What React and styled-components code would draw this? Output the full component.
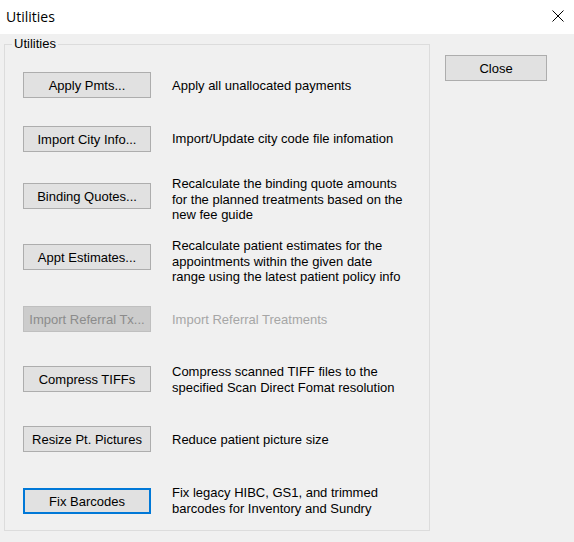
import React from 'react';
import styled, { createGlobalStyle } from 'styled-components';

const GlobalStyle = createGlobalStyle`
html, body {
    margin: 0;
    padding: 0;
    background: #f0f0f0;
}
body {
    font-family: "Liberation Sans", Arial, sans-serif;
    font-size: 13px;
    color: #000;
}
`

const Window = styled.div`
width: 574px;
height: 542px;
display: flex;
flex-direction: column;
background: #f0f0f0;
overflow: hidden;
`

const TitleBar = styled.div`
height: 34px;
flex: none;
background: #fff;
display: flex;
align-items: center;
justify-content: space-between;
padding: 0 10px 0 6px;
box-sizing: border-box;
`

const Title = styled.span`
font-family: "Open Sans", "Noto Sans", sans-serif;
font-size: 14px;
padding-bottom: 2px;
`

const CloseX = styled.button`
width: 12px;
height: 12px;
padding: 0;
border: 0;
background: none;
display: flex;
margin-bottom: 3px;
`

const Body = styled.div`
flex: 1;
display: flex;
align-items: flex-start;
padding: 2px 0 0 4px;
`

const Group = styled.fieldset`
margin: 0;
padding: 0;
width: 426px;
height: 495px;
box-sizing: border-box;
border: 1px solid #dcdcdc;
`

const Legend = styled.legend`
margin-left: 7px;
padding: 0 2px;
line-height: 16px;
`

const Rows = styled.div`
padding: 20px 0 0 18px;
`

const Row = styled.div`
display: flex;
align-items: flex-start;
height: ${p => p.$height}px;
`

const Button = styled.button`
width: 128px;
height: 26px;
flex: none;
box-sizing: border-box;
padding: 0;
font-family: "Liberation Sans", Arial, sans-serif;
font-size: 13px;
color: ${p => p.disabled ? '#8b8b8b' : '#000'};
background: ${p => p.disabled ? '#cccccc' : '#e1e1e1'};
border: ${p => p.$default ? '2px solid #0078d7' : `1px solid ${p.disabled ? '#bfbfbf' : '#adadad'}`};
`

const Description = styled.div`
margin: ${p => p.$offset}px 0 0 21px;
line-height: 15.5px;
color: ${p => p.$disabled ? '#a6a6a6' : '#000'};
`

const CloseButton = styled(Button)`
width: 102px;
margin: 19px 0 0 15px;
`

const utilities = [
    { label: 'Apply Pmts...', text: ['Apply all unallocated payments'], height: 54, offset: 6 },
    { label: 'Import City Info...', text: ['Import/Update city code file infomation'], height: 57, offset: 5 },
    { label: 'Binding Quotes...', text: ['Recalculate the binding quote amounts', 'for the planned treatments based on the', 'new fee guide'], height: 61, offset: -7 },
    { label: 'Appt Estimates...', text: ['Recalculate patient estimates for the', 'appointments within the given date', 'range using the latest patient policy info'], height: 62, offset: -6 },
    { label: 'Import Referral Tx...', text: ['Import Referral Treatments'], height: 60, offset: 6, disabled: true },
    { label: 'Compress TIFFs', text: ['Compress scanned TIFF files to the', 'specified Scan Direct Fomat resolution'], height: 60, offset: -2 },
    { label: 'Resize Pt. Pictures', text: ['Reduce patient picture size'], height: 62, offset: 6 },
    { label: 'Fix Barcodes', text: ['Fix legacy HIBC, GS1, and trimmed', 'barcodes for Inventory and Sundry'], height: 40, offset: -3, isDefault: true },
];

const App = () => {
    return (
        <Window>
            <GlobalStyle />
            <TitleBar>
                <Title>Utilities</Title>
                <CloseX aria-label="Close">
                    <svg width="12" height="12" viewBox="0 0 12 12">
                        <path d="M0.5 0.5 L11.5 11.5 M11.5 0.5 L0.5 11.5" stroke="#000" strokeWidth="1" fill="none" />
                    </svg>
                </CloseX>
            </TitleBar>
            <Body>
                <Group>
                    <Legend>Utilities</Legend>
                    <Rows>
                        {utilities.map(u => (
                            <Row key={u.label} $height={u.height}>
                                <Button disabled={u.disabled} $default={u.isDefault}>{u.label}</Button>
                                <Description $offset={u.offset} $disabled={u.disabled}>
                                    {u.text.map(line => <div key={line}>{line}</div>)}
                                </Description>
                            </Row>
                        ))}
                    </Rows>
                </Group>
                <CloseButton>Close</CloseButton>
            </Body>
        </Window>
    );
};

export default App;
